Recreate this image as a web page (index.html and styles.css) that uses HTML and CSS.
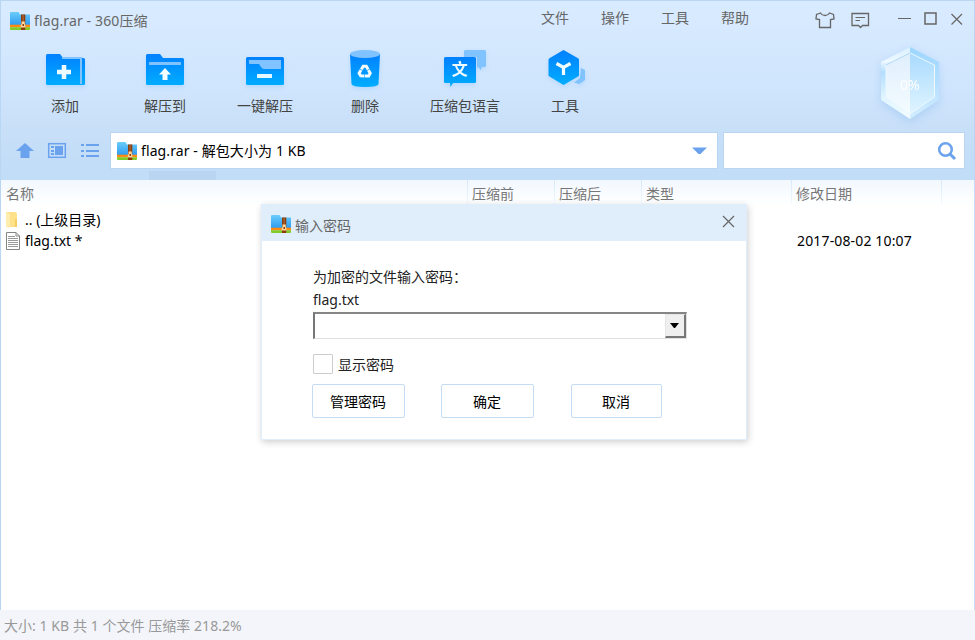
FILE: index.html
```html
<!DOCTYPE html>
<html lang="zh-CN">
<head>
    <meta charset="UTF-8">
    <meta name="viewport" content="width=device-width, initial-scale=1.0">
    <title>flag.rar - 360压缩</title>
    <link rel="stylesheet" href="styles.css">
</head>
<body>
    <!-- shared archive icon and gradients -->
    <svg class="defs" width="0" height="0">
        <defs>
            <linearGradient id="blue" x1="0" y1="0" x2="0" y2="1">
                <stop offset="0" stop-color="#0180ff"/>
                <stop offset="1" stop-color="#00adff"/>
            </linearGradient>
            <linearGradient id="folder" x1="0" y1="0" x2="0" y2="1">
                <stop offset="0" stop-color="#6bcdfb"/>
                <stop offset="1" stop-color="#2e9cf0"/>
            </linearGradient>
            <symbol id="archive" viewBox="0 0 20 18">
                <path d="M0 1Q0 0 1 0H8.500L10 2.500H20V13H0Z" fill="url(#folder)"/>
                <path d="M0 12.700H20V15.300H0Z" fill="#ff8a12"/>
                <path d="M0 15.200H20V17Q20 18 19 18H1Q0 18 0 17Z" fill="#80cb28"/>
                <path d="M11 2.500H15.300V18H11Z" fill="#8b3d0c"/>
                <path d="M12.500 3H13.700V10H12.500Z" fill="#a9683c"/>
                <path d="M11.500 9.500H14.800V12L15.500 13V15.500H10.800V13L11.500 12Z" fill="#ffd79a"/>
                <rect x="12.500" y="12" width="1.500" height="2" fill="#8b3d0c"/>
            </symbol>
        </defs>
    </svg>

    <div class="window">
        <div class="top">
            <div class="title-bar">
                <svg class="archive" width="20" height="18"><use href="#archive"/></svg>
                <span class="title">flag.rar - 360压缩</span>
                <div class="menu">
                    <span>文件</span>
                    <span>操作</span>
                    <span>工具</span>
                    <span>帮助</span>
                </div>
                <svg class="window-buttons" width="160" height="36" fill="none" stroke="#666">
                    <path d="M10.500 12L6.500 13.500L6 18L9.500 18.500V26.500H20.500V18.500L24 18L23.500 13.500L19.500 12Q18 14.500 15 14.500Q12 14.500 10.500 12Z" stroke-width="1.300"/>
                    <path d="M42 12.500H58.500V24.500H52.500L50.500 26.500L48.500 24.500H42Z" stroke-width="1.300"/>
                    <path d="M45.500 16.500H55M45.500 19.500H50"/>
                    <path d="M88 17.500H101"/>
                    <rect x="115" y="12" width="11" height="11" stroke-width="1.500"/>
                    <path d="M141.500 13L152 23.500M152 13L141.500 23.500" stroke-width="1.200"/>
                </svg>
            </div>

            <div class="toolbar">
                <div class="tool">
                    <svg width="100" height="50">
                        <path d="M31 9.500Q31 8 32.500 8H45L48 12H68.500Q70 12 70 13.500V37.500Q70 39 68.500 39H32.500Q31 39 31 37.500Z" fill="url(#blue)"/>
                        <path d="M47 12H66V38" fill="none" stroke="#80c3ff" stroke-width="2"/>
                        <path d="M42 26H56M49 19V33" stroke="#eefcff" stroke-width="4.500"/>
                    </svg>
                    <span>添加</span>
                </div>
                <div class="tool">
                    <svg width="100" height="50">
                        <path d="M31 9.500Q31 8 32.500 8H45L48 12H67.500Q69 12 69 13.500V37.500Q69 39 67.500 39H32.500Q31 39 31 37.500Z" fill="url(#blue)"/>
                        <rect x="34" y="16" width="32" height="3" rx="0.500" fill="#80c3ff"/>
                        <path d="M50 22L56 28.500H52.500V34H47.500V28.500H44Z" fill="#f4fdff"/>
                    </svg>
                    <span>解压到</span>
                </div>
                <div class="tool">
                    <svg width="100" height="50">
                        <rect x="31" y="11" width="38" height="28" rx="1.500" fill="url(#blue)"/>
                        <path d="M34 14H66V23H49Q47 23 46 21L44 18H35Q34 18 34 17Z" fill="#80c3ff"/>
                        <rect x="42" y="28" width="15" height="4" rx="0.500" fill="#e6f8ff"/>
                    </svg>
                    <span>一键解压</span>
                </div>
                <div class="tool">
                    <svg width="100" height="50">
                        <path d="M35 8H65L63.500 38Q63 41 50 41Q37 41 36.500 38Z" fill="url(#blue)"/>
                        <ellipse cx="50" cy="8" rx="15" ry="4" fill="#80c3ff"/>
                        <g fill="none" stroke="#f2fcff" stroke-width="3">
                            <path id="arm" d="M46.300 23.500L48.200 20.300H51.300L53.200 23.500"/>
                            <use href="#arm" transform="rotate(120 49.700 25.800)"/>
                            <use href="#arm" transform="rotate(240 49.700 25.800)"/>
                        </g>
                    </svg>
                    <span>删除</span>
                </div>
                <div class="tool">
                    <svg width="100" height="50">
                        <path d="M50 4H69.500Q71 4 71 5.500V20Q71 21 69.500 21H67L65.500 24L64 21.500H62V11H49V5Z" fill="#80c3ff"/>
                        <path d="M29 12.500Q29 11 30.500 11H59.500Q61 11 61 12.500V35.500Q61 37 59.500 37H38L35.500 41L35 37H30.500Q29 37 29 35.500Z" fill="url(#blue)"/>
                        <text class="glyph" x="36.800" y="28.700">文</text>
                    </svg>
                    <span>压缩包语言</span>
                </div>
                <div class="tool">
                    <svg width="100" height="50">
                        <path d="M66 22L70 24V34L64.500 38L59 36.500L65 32Z" fill="#80c3ff"/>
                        <path d="M48.500 4L63 12.200Q64 13 64 14V29Q64 30 63 30.500L48.500 39L34.500 30.500Q33.500 30 33.500 29V14Q33.500 13 34.500 12.200Z" fill="url(#blue)"/>
                        <path d="M41.500 17.500L48.500 21.500L55.500 17.500M48.500 21V29" fill="none" stroke="#f4fdff" stroke-width="3.200"/>
                    </svg>
                    <span>工具</span>
                </div>
                <svg class="shield" width="70" height="84">
                    <defs>
                        <linearGradient id="rim" x1="0" y1="0" x2="0" y2="1">
                            <stop offset="0" stop-color="#d9f0ff"/>
                            <stop offset="0.200" stop-color="#eef8ff"/>
                            <stop offset="0.350" stop-color="#b2deff"/>
                            <stop offset="0.700" stop-color="#e0f5ff"/>
                            <stop offset="1" stop-color="#f2fcff"/>
                        </linearGradient>
                        <linearGradient id="rim-right" x1="0" y1="0" x2="0" y2="1">
                            <stop offset="0" stop-color="#9dd6ff"/>
                            <stop offset="0.500" stop-color="#b5dfff"/>
                            <stop offset="1" stop-color="#d4edff"/>
                        </linearGradient>
                        <linearGradient id="left" x1="0" y1="0" x2="0" y2="1">
                            <stop offset="0" stop-color="#e0eefd"/>
                            <stop offset="1" stop-color="#f4fcff"/>
                        </linearGradient>
                        <linearGradient id="right" x1="0" y1="0" x2="0" y2="1">
                            <stop offset="0" stop-color="#a9daff"/>
                            <stop offset="1" stop-color="#e0f5ff"/>
                        </linearGradient>
                    </defs>
                    <path d="M35 5L6 20V58L35 77Z" fill="url(#rim)"/>
                    <path d="M35 5L64 20V58L35 77Z" fill="url(#rim-right)"/>
                    <path d="M35 11L11 23V55L35 72Z" fill="url(#left)"/>
                    <path d="M35 11L60 23V55L35 72Z" fill="url(#right)"/>
                    <path d="M35 11L11 23" fill="none" stroke="#b2d8f8"/>
                    <path d="M35 11L59.500 23V55L35 72L11 55V23" fill="none" stroke="#edf9ff"/>
                    <text class="percent" x="25" y="48">0%</text>
                </svg>
            </div>

            <div class="address-bar">
                <svg class="nav" width="110" height="37">
                    <g fill="#6ba2ee">
                        <path d="M24 11L33 19H28.500V26H19.500V19H15Z"/>
                        <path d="M80 12H83V14H80ZM80 18H83V20H80ZM80 23H83V25H80ZM85 12H98V14H85ZM85 18H98V20H85ZM85 23H98V25H85Z"/>
                        <path d="M54 14H62V23H54ZM50 14H53V16H50ZM50 18H53V20H50ZM50 21H53V23H50Z"/>
                    </g>
                    <rect x="47.700" y="11.700" width="16.600" height="13.600" fill="none" stroke="#6ba2ee" stroke-width="1.500"/>
                </svg>
                <div class="path-box">
                    <svg class="archive" width="20" height="18"><use href="#archive"/></svg>
                    <span>flag.rar - 解包大小为 1 KB</span>
                    <svg class="arrow" width="15" height="8"><path d="M0 0.500H15L8.500 7H6.500Z" fill="#6ba2ee"/></svg>
                </div>
                <div class="search-box">
                    <svg width="20" height="20" fill="none" stroke="#6ba2ee">
                        <circle cx="8.500" cy="8.500" r="6.300" stroke-width="2.500"/>
                        <path d="M13 13L18 18" stroke-width="3"/>
                    </svg>
                </div>
            </div>
            <div class="tab-mark"></div>
        </div>

        <div class="list">
            <div class="columns list-head">
                <span>名称</span>
                <span>压缩前</span>
                <span>压缩后</span>
                <span>类型</span>
                <span>修改日期</span>
                <span></span>
            </div>
            <div class="columns row">
                <span class="name">
                    <svg width="18" height="18">
                        <path d="M1 1H10Q12 1 12 3V16H1Z" fill="#ffe18a"/>
                        <path d="M1 1L5 3V17L1 16Z" fill="#ffedb0"/>
                        <path d="M10 8H12V16H10Z" fill="#f5cd62"/>
                    </svg>
                    .. (上级目录)
                </span>
            </div>
            <div class="columns row">
                <span class="name">
                    <svg width="18" height="18">
                        <path d="M1.500 0.500H11L14.500 4V17.500H1.500Z" fill="#fff" stroke="#858585"/>
                        <path d="M11 0.500V4H14.500" fill="none" stroke="#858585"/>
                        <path d="M3 4.500H10M3 6.500H13M3 8.500H13M3 10.500H13M3 12.500H13M3 14.500H13" stroke="#999"/>
                    </svg>
                    flag.txt *
                </span>
                <span class="date">2017-08-02 10:07</span>
            </div>
        </div>
        <div class="status-bar">大小: 1 KB 共 1 个文件 压缩率 218.2%</div>
    </div>

    <div class="dialog">
        <div class="dialog-head">
            <svg class="archive" width="20" height="18"><use href="#archive"/></svg>
            <span>输入密码</span>
            <svg class="close" width="13" height="13"><path d="M1 1L12 12M12 1L1 12" stroke="#666" stroke-width="1.200"/></svg>
        </div>
        <div class="dialog-body">
            <div class="message">为加密的文件输入密码：</div>
            <div class="message">flag.txt</div>
            <div class="combo">
                <div class="combo-btn">
                    <svg width="9" height="5"><path d="M0 0H9L5 5H4Z" fill="#000"/></svg>
                </div>
            </div>
            <div class="check">
                <span class="check-box"></span>
                <span class="check-label">显示密码</span>
            </div>
            <div class="buttons">
                <button>管理密码</button>
                <button>确定</button>
                <button>取消</button>
            </div>
        </div>
    </div>
</body>
</html>
```
FILE: styles.css
```css
* {
    box-sizing: border-box;
}
body {
    margin: 0;
    font-family: "Noto Sans", "Noto Sans CJK SC", sans-serif;
    font-size: 14px;
    line-height: 20px;
    color: #000;
    overflow: hidden;
}
svg {
    display: block;
    flex: none;
}
span {
    white-space: nowrap;
}
.defs {
    position: absolute;
}
.window {
    height: 640px;
    display: flex;
    flex-direction: column;
}
.top {
    height: 180px;
    background: linear-gradient(#d9ebff, #cfe5fd 50%, #c8dff8 72%, #c2ddf8 92%);
    border: 1px solid #b9d7f3;
    border-bottom: none;
}
.title-bar {
    height: 39px;
    padding-left: 9px;
    display: flex;
    align-items: center;
    color: #666;
}
.title {
    width: 120px;
    margin: 1px 0 0 4px;
    letter-spacing: 0.13px;
}
.menu {
    display: flex;
    gap: 32px;
    margin-left: 387px;
    margin-top: -5px;
}
.window-buttons {
    margin-left: 61px;
    margin-bottom: 4px;
}
.toolbar {
    height: 92px;
    padding-left: 14px;
    display: flex;
}
.tool {
    width: 100px;
    padding-top: 6px;
    display: flex;
    flex-direction: column;
    align-items: center;
    color: #444;
}
.tool svg {
    filter: drop-shadow(0 2px 2px rgba(80, 160, 255, 0.2));
}
.glyph {
    font-size: 16px;
    font-weight: bold;
    fill: #f0fbff;
}
.shield {
    margin: 2px 0 0 260px;
    filter: drop-shadow(0 3px 4px rgba(80, 150, 230, 0.25));
}
.percent {
    font-size: 14px;
    fill: #fff;
}
.address-bar {
    height: 37px;
    display: flex;
}
.nav {
    width: 109px;
}
.path-box {
    width: 608px;
    padding: 0 10px 0 6px;
    display: flex;
    align-items: center;
    background-color: #fff;
    border: 1px solid #b9d7f3;
}
.path-box span {
    margin-left: 4px;
    letter-spacing: 0.1px;
}
.arrow {
    margin-left: auto;
}
.search-box {
    width: 242px;
    margin-left: 5px;
    padding-right: 7px;
    display: flex;
    align-items: center;
    justify-content: flex-end;
    background-color: #fff;
    border: 1px solid #b9d7f3;
}
.tab-mark {
    width: 67px;
    height: 9px;
    margin: 2px 0 0 148px;
    background-color: #b9d5f2;
}
.list {
    flex: 1;
    background-color: #fff;
    border-left: 1px solid #b9d7f3;
    border-right: 1px solid #c5def5;
}
.columns {
    display: grid;
    grid-template-columns: 466px 87px 87px 150px 150px 1fr;
}
.list-head {
    height: 29px;
    color: #777;
    background: linear-gradient(#f2f8ff, #fff 25px);
}
.list-head span {
    height: 24px;
    padding: 4px 0 0 4px;
    border-left: 1px solid;
    border-image: linear-gradient(#d3e7fb, #f5faff) 1;
}
.list-head span:first-child {
    padding-left: 5px;
    border: none;
}
.row {
    height: 21px;
    align-items: center;
}
.name {
    display: flex;
    align-items: center;
    gap: 2px;
    padding-left: 4px;
}
.date {
    grid-column: 5;
    padding-left: 6px;
    letter-spacing: 0.15px;
}
.status-bar {
    height: 30px;
    padding: 6px 4px;
    background-color: #f3f5fa;
    color: #999;
    letter-spacing: 0.05px;
}
.dialog {
    position: absolute;
    left: 261px;
    top: 204px;
    width: 486px;
    height: 236px;
    background-color: #fff;
    border: 1px solid #e0edfb;
    box-shadow: 1px 2px 7px rgba(0, 0, 0, 0.2);
}
.dialog-head {
    height: 36px;
    padding: 2px 11px 0 9px;
    display: flex;
    align-items: center;
    gap: 4px;
    background-color: #e0eefc;
    color: #666;
}
.dialog-head span {
    margin-top: 4px;
}
.dialog-head .close {
    margin: -5px 0 0 auto;
}
.dialog-body {
    padding: 26px 51px 0;
    color: #222;
}
.message {
    height: 22.5px;
}
.combo {
    width: 374px;
    height: 27px;
    display: flex;
    justify-content: flex-end;
    border: 1px solid #e0e0e0;
    border-top: 2px solid #858585;
    border-left: 2px solid #777;
}
.combo-btn {
    width: 21px;
    padding-right: 1px;
    display: flex;
    align-items: center;
    justify-content: center;
    background-color: #efefef;
    border: 1px solid #e5e5e5;
    border-right: 2px solid #777;
    border-bottom: 2px solid #777;
}
.check {
    display: flex;
    align-items: center;
    gap: 5px;
    height: 20px;
    margin-top: 15px;
}
.check-box {
    width: 20px;
    height: 20px;
    border: 1px solid #ccc;
    border-radius: 1px;
}
.check-label {
    margin-top: 2px;
}
.buttons {
    display: grid;
    grid-template-columns: 93px 93px 91px;
    column-gap: 36px;
    margin: 10px 0 0 -1px;
}
.buttons button {
    height: 34px;
    padding: 2px 1px 0 0;
    font: inherit;
    color: #000;
    background-color: #fff;
    border: 1px solid #c5dcf5;
    border-radius: 2px;
}
.buttons button:last-child {
    margin: 0 -1px 0 1px;
}
```
